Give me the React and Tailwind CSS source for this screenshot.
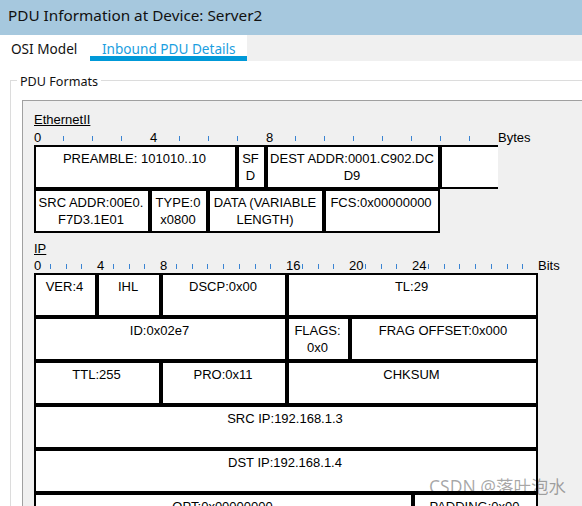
import React from "react";

const FONT_UI = "font-['Noto_Sans',sans-serif]";
const FONT_ARIAL = "font-['Liberation_Sans',Arial,sans-serif]";

function Tick() {
  return <span className="mt-[6px] h-[5px] w-px bg-[#3a84d2]" />;
}

function Ruler({ count, slotClass, labels, unit, tickTop }) {
  const slots = Array.from({ length: count }, (_, i) => i);
  return (
    <div className="flex h-[15px] whitespace-nowrap">
      {slots.map((i) => (
        <div key={i} className={"flex shrink-0 items-start " + slotClass}>
          {labels[i] !== undefined ? <span>{labels[i]}</span> : <Tick />}
        </div>
      ))}
      <span>{unit}</span>
    </div>
  );
}

function Cell({ className, children }) {
  return (
    <div
      className={
        "h-[44px] shrink-0 overflow-hidden whitespace-nowrap border-2 border-black bg-white pl-px pr-[3px] pt-[3px] text-center leading-[17px] " +
        className
      }
    >
      {children}
    </div>
  );
}

function Row({ children }) {
  return <div className="flex">{children}</div>;
}

export default function App() {
  return (
    <div className="relative h-[506px] w-[582px] overflow-hidden bg-white">
      <div
        className={
          "h-[35px] bg-[#a6c8de] pl-[8px] pt-[5px] text-[15.3px] leading-[21px] text-[#111] " +
          FONT_UI
        }
      >
        PDU Information at Device: Server2
      </div>

      <div className={"flex h-[26px] text-[13.6px] leading-[19px] " + FONT_UI}>
        <div className="w-[90px] bg-white pl-[11px] pt-[4px] text-[#111]">OSI Model</div>
        <div className="w-[157px] border-b-[5px] border-[#0099d8] bg-white pl-[12px] pt-[4px] text-[#1a9ee0]">
          Inbound PDU Details
        </div>
        <div className="flex-1 bg-[#f0f0f0]" />
      </div>

      <div className="relative ml-[10px] mt-[19px] border-l border-t border-[#dcdcdc] pl-[11px] pt-[19px]">
        <span
          className={
            "absolute -top-[8px] left-[6px] bg-white px-[3px] text-[12.6px] leading-[17px] text-[#111] " +
            FONT_UI
          }
        >
          PDU Formats
        </span>

        <div
          className={
            "h-[420px] border-l border-t border-[#a0a0a0] bg-[#f0f0f0] pl-[11px] pt-[11px] text-[13px] leading-[15px] text-black " +
            FONT_ARIAL
          }
        >
          <div className="underline">EthernetII</div>
          <div className="mt-[3px]">
            <Ruler
              count={16}
              slotClass="w-[29px]"
              labels={{ 0: "0", 4: "4", 8: "8" }}
              unit="Bytes"
            />
          </div>
          <Row>
            <Cell className="w-[203px]">PREAMBLE: 101010..10</Cell>
            <Cell className="w-[29px]">
              SF
              <br />D
            </Cell>
            <Cell className="w-[174px]">
              DEST ADDR:0001.C902.DC
              <br />
              D9
            </Cell>
            <div className="h-[44px] w-[58px] shrink-0 border-y-2 border-l-2 border-black bg-white" />
          </Row>
          <Row>
            <Cell className="w-[116px]">
              SRC ADDR:00E0.
              <br />
              F7D3.1E01
            </Cell>
            <Cell className="w-[58px]">
              TYPE:0
              <br />
              x0800
            </Cell>
            <Cell className="w-[116px]">
              DATA (VARIABLE
              <br />
              LENGTH)
            </Cell>
            <Cell className="w-[116px]">FCS:0x00000000</Cell>
          </Row>

          <div className="mt-[8px] underline">IP</div>
          <div className="mt-[2px]">
            <Ruler
              count={32}
              slotClass="w-[15.75px]"
              labels={{ 0: "0", 4: "4", 8: "8", 16: "16", 20: "20", 24: "24" }}
              unit="Bits"
            />
          </div>
          <Row>
            <Cell className="w-[63px]">VER:4</Cell>
            <Cell className="w-[64px]">IHL</Cell>
            <Cell className="w-[126px]">DSCP:0x00</Cell>
            <Cell className="w-[251px]">TL:29</Cell>
          </Row>
          <Row>
            <Cell className="w-[253px]">ID:0x02e7</Cell>
            <Cell className="w-[63px]">
              FLAGS:
              <br />
              0x0
            </Cell>
            <Cell className="w-[188px]">FRAG OFFSET:0x000</Cell>
          </Row>
          <Row>
            <Cell className="w-[127px]">TTL:255</Cell>
            <Cell className="w-[126px]">PRO:0x11</Cell>
            <Cell className="w-[251px]">CHKSUM</Cell>
          </Row>
          <Row>
            <Cell className="w-[504px]">SRC IP:192.168.1.3</Cell>
          </Row>
          <Row>
            <Cell className="w-[504px]">DST IP:192.168.1.4</Cell>
          </Row>
          <Row>
            <Cell className="w-[379px]">OPT:0x00000000</Cell>
            <Cell className="w-[125px]">PADDING:0x00</Cell>
          </Row>
        </div>
      </div>

      <div
        className="pointer-events-none absolute left-[429px] top-[474px] whitespace-nowrap text-[17.5px] leading-[24px] text-black/35 font-['Noto_Sans','Noto_Sans_CJK_SC',sans-serif]"
      >
        CSDN @落叶泡水
      </div>
    </div>
  );
}
